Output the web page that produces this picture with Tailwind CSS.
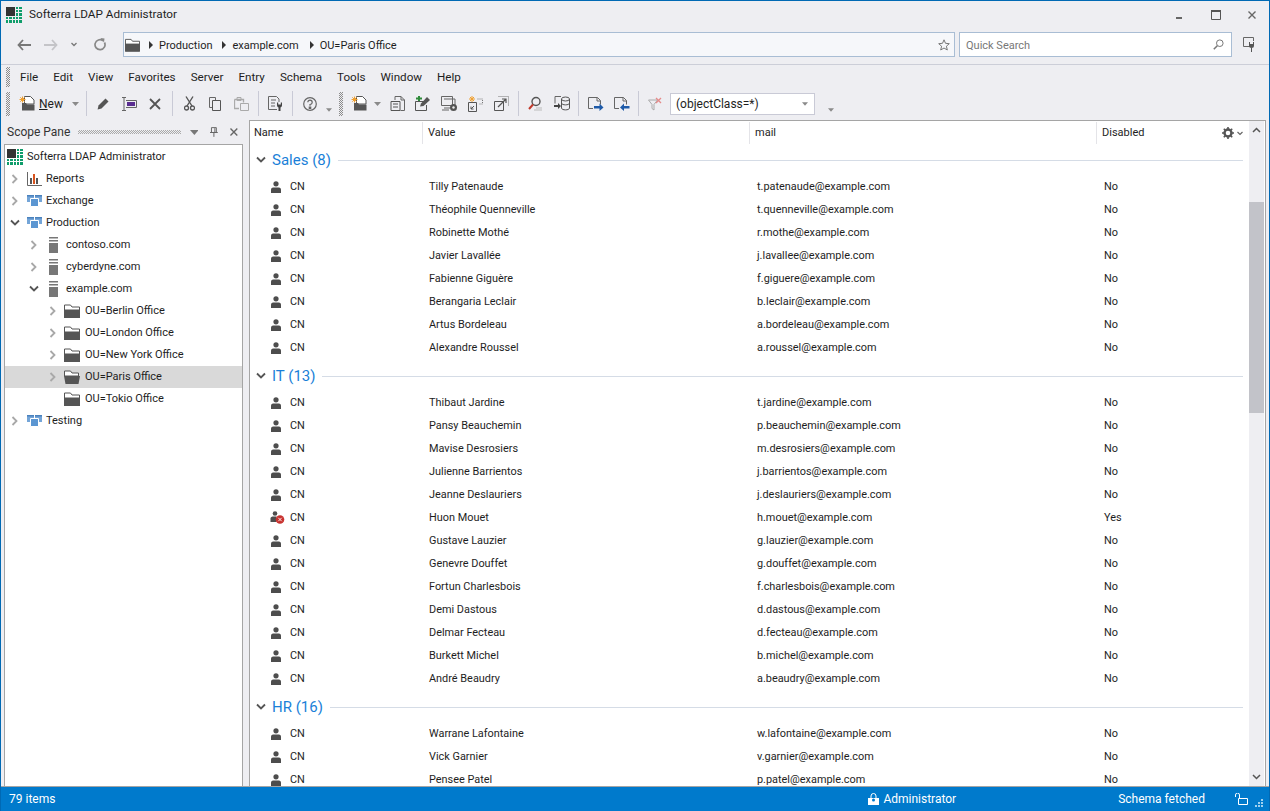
<!DOCTYPE html>
<html>
<head>
<meta charset="UTF-8">
<title>Softerra LDAP Administrator</title>
<script src="https://cdn.jsdelivr.net/npm/@tailwindcss/browser@4"></script>
</head>
<body class="overflow-hidden">
<svg class="hidden" width="0" height="0">
  <defs>
    <symbol id="folder" viewBox="0 0 16 14"><path d="M.5 1h6l1.500 2h7.500v10.500H.5z" fill="#fff" stroke="#555"/><path d="M0 5.500h16V14H0z" fill="#555"/></symbol>
    <symbol id="logo" viewBox="0 0 16 16"><path d="M0 0h9v9H0z" fill="#333"/><path d="M10 0h2v2h-2zM13 0h3v2h-3zM10 3h2v2h-2zM13 3h3v2h-3zM10 6h2v3h-2zM13 6h3v3h-3zM0 10h2v2H0zM3 10h3v2H3zM7 10h2v2H7zM10 10h2v2h-2zM13 10h3v2h-3zM0 13h2v3H0zM3 13h3v3H3zM7 13h2v3H7zM10 13h2v3h-2zM13 13h3v3h-3z" fill="#0f9d6b"/></symbol>
    <symbol id="cluster" viewBox="0 0 15 12"><path d="M0 0h7v7H0zM8 0h7v7H8z" fill="#74a5d8"/><path d="M0 0h7v1.500H0zM8 0h7v1.500H8z" fill="#4a82bd"/><path d="M3.500 3.500h8v8h-8z" fill="#5b96d2" stroke="#fff"/></symbol>
    <symbol id="server" viewBox="0 0 9 16"><path d="M0 0h9v1.500H0zM0 3h9v1.500H0zM0 6h9v10H0z" fill="#777"/></symbol>
    <symbol id="chev-r" viewBox="0 0 8 10"><path d="M1.500 1l4 4-4 4" fill="none" stroke="#a8a8a8" stroke-width="1.800"/></symbol>
    <symbol id="chev-d" viewBox="0 0 10 8"><path d="M1 1.500l4 4 4-4" fill="none" stroke="#555" stroke-width="1.800"/></symbol>
    <symbol id="person" viewBox="0 0 12 12"><circle cx="6" cy="2.800" r="2.600" fill="#4d4d4d"/><path d="M1 12V8.500C1 7 2.500 6.500 4 6.500h4c1.500 0 3 .5 3 2V12z" fill="#4d4d4d"/></symbol>
    <symbol id="tri" viewBox="0 0 7 4"><path d="M0 0h7L3.500 4z" fill="#8a8a8a"/></symbol>
    <symbol id="crumb" viewBox="0 0 4 8"><path d="M0 0l4 4-4 4z" fill="#333"/></symbol>
    <symbol id="newdoc" viewBox="0 0 17 15"><path d="M5.500 .5h6l3.500 3.500v4h-9.500z" fill="#fff" stroke="#555"/><path d="M3 7h4l1 1.500h7.500v6H3z" fill="#555"/><path d="M3.500 .5v6M.5 3.500h6M1.300 1.300l4.400 4.400M5.700 1.300L1.300 5.700" stroke="#f0a030"/></symbol>
  </defs>
</svg>

<div class="w-[1270px] h-[811px] flex flex-col bg-[#eeeef2] border-x border-t border-[#0069b4] text-[12px] text-[#1e1e1e] font-['Roboto','Liberation_Sans',sans-serif]">

  <!-- title bar -->
  <div class="h-[27px] shrink-0 flex items-center pl-[5px]">
    <svg width="16" height="16" class="mr-[7px]"><use href="#logo"/></svg>
    <span class="text-[11.75px]">Softerra LDAP Administrator</span>
    <div class="ml-auto flex items-center">
      <svg width="10" height="10" class="mr-[27px]" viewBox="0 0 10 10"><path d="M2 7h6v2H2z" fill="#666"/></svg>
      <svg width="10" height="10" class="mr-[26px]" viewBox="0 0 10 10"><path d="M.5 .5h9v9h-9z" fill="none" stroke="#555"/><path d="M0 0h10v2H0z" fill="#555"/></svg>
      <svg width="10" height="10" class="mr-[12px]" viewBox="0 0 10 10"><path d="M1.500 1.500l7 7M8.500 1.500l-7 7" stroke="#666" stroke-width="1.400"/></svg>
    </div>
  </div>

  <!-- navigation bar -->
  <div class="h-[37px] shrink-0 flex items-center border-b border-[#ccced8] pb-[3px]">
    <div class="w-[122px] flex items-center shrink-0">
      <svg width="14" height="12" class="ml-[16px]" viewBox="0 0 14 12"><path d="M6 1L1.500 6 6 11M2 6h12" fill="none" stroke="#777" stroke-width="1.800"/></svg>
      <svg width="14" height="12" class="ml-[13px]" viewBox="0 0 14 12"><path d="M8 1l4.500 5L8 11M12 6H0" fill="none" stroke="#c4c4c8" stroke-width="1.800"/></svg>
      <svg width="6" height="5" class="ml-[13px]" viewBox="0 0 6 5"><path d="M.5 1L3 3.500 5.500 1" fill="none" stroke="#777" stroke-width="1.300"/></svg>
      <svg width="12" height="13" class="ml-[17px]" viewBox="0 0 12 13"><path d="M10.500 4.500a5 5 0 1 1-1.500-1.800" fill="none" stroke="#888" stroke-width="1.700"/><path d="M6.500 0l4 .5-.5 4z" fill="#888"/></svg>
    </div>
    <div class="w-[832px] h-[25px] flex items-center border border-[#a9bdd4] bg-[#f6f7fa] pl-[1px] pr-[3px] text-[11px]">
      <svg width="15" height="14"><use href="#folder"/></svg>
      <svg width="4" height="8" class="ml-[9px]"><use href="#crumb"/></svg>
      <span class="ml-[6px] pt-[3px]">Production</span>
      <svg width="4" height="8" class="ml-[10px]"><use href="#crumb"/></svg>
      <span class="ml-[6px] pt-[3px]">example.com</span>
      <svg width="4" height="8" class="ml-[11px]"><use href="#crumb"/></svg>
      <span class="ml-[6px] pt-[3px]">OU=Paris Office</span>
      <svg width="12" height="12" class="ml-auto mr-[1px]" viewBox="0 0 12 12"><path d="M6 .8l1.500 3.500 3.800.4-2.900 2.500.9 3.800L6 9l-3.300 2 .9-3.800L.7 4.700l3.800-.4z" fill="none" stroke="#777"/></svg>
    </div>
    <div class="ml-[4px] w-[273px] h-[25px] flex items-center border border-[#a9bdd4] bg-white pl-[6px] pr-[7px] text-[#777] text-[11px]">
      <span class="pt-[3px]">Quick Search</span>
      <svg width="11" height="11" class="ml-auto" viewBox="0 0 11 11"><circle cx="6.800" cy="4.200" r="3.300" fill="none" stroke="#777"/><path d="M4.300 6.700L.8 10.200" stroke="#777" stroke-width="1.500"/></svg>
    </div>
    <svg width="13" height="15" class="ml-[11px]" viewBox="0 0 13 15"><path d="M7 9.500H.5v-9h10V4" fill="none" stroke="#666"/><path d="M6 5v3.500a2.500 2.500 0 0 0 5 0V5h-1v2H7V5zM8 11h1v4H8z" fill="#555"/></svg>
  </div>

  <!-- menu bar -->
  <div class="h-[24px] shrink-0 flex items-center pl-[5px]">
    <div class="w-[4px] h-[20px] bg-[conic-gradient(#8c8c8c_25%,transparent_0_50%,#8c8c8c_0_75%,transparent_0)] bg-[length:2px_2px] mr-[10px]"></div>
    <div class="flex gap-[15px] text-[11.65px] pt-[1px]">
      <span>File</span><span>Edit</span><span>View</span><span>Favorites</span><span>Server</span><span>Entry</span><span>Schema</span><span>Tools</span><span>Window</span><span>Help</span>
    </div>
  </div>

  <!-- toolbar -->
  <div class="h-[29px] shrink-0 flex items-center pl-[5px]">
    <div class="w-[4px] h-[24px] bg-[conic-gradient(#8c8c8c_25%,transparent_0_50%,#8c8c8c_0_75%,transparent_0)] bg-[length:2px_2px] mr-[9px]"></div>
    <svg width="17" height="15"><use href="#newdoc"/></svg>
    <span class="ml-[3px] w-[33px]"><span class="underline">N</span>ew</span>
    <svg width="7" height="4"><use href="#tri"/></svg>
    <div class="w-px h-[25px] bg-[#c9cad6] ml-[7px]"></div>
    <!-- pencil -->
    <div class="w-[27px] ml-[2px] flex justify-center"><svg width="12" height="12" viewBox="0 0 12 12"><path d="M8.500 .5l3 3-7 7L.6 11.400l.9-3.900z" fill="#555"/></svg></div>
    <!-- rename -->
    <div class="w-[25px] flex justify-center"><svg width="16" height="14" viewBox="0 0 16 14"><path d="M1 .5h4M1 13.500h4M3 .5v13M5 3.500h10.500v7H5" fill="none" stroke="#666"/><path d="M6 5h8v4H6z" fill="#5a2d91"/></svg></div>
    <!-- delete -->
    <div class="w-[27px] flex justify-center"><svg width="12" height="12" viewBox="0 0 12 12"><path d="M1 1l10 10M11 1L1 11" stroke="#555" stroke-width="1.800"/></svg></div>
    <div class="w-px h-[25px] bg-[#c9cad6] ml-[4px]"></div>
    <!-- cut -->
    <div class="w-[32px] flex justify-center"><svg width="11" height="15" viewBox="0 0 11 15"><path d="M2 .5L8 10M9 .5L3 10" stroke="#555" stroke-width="1.400"/><circle cx="2.500" cy="12" r="2" fill="none" stroke="#555" stroke-width="1.300"/><circle cx="8.500" cy="12" r="2" fill="none" stroke="#555" stroke-width="1.300"/></svg></div>
    <!-- copy -->
    <div class="w-[20px] flex justify-center"><svg width="12" height="14" viewBox="0 0 12 14"><path d="M3.500 10.500H.5v-10h6V3" fill="none" stroke="#666"/><path d="M3.500 3.500h8v10h-8z" fill="none" stroke="#555"/></svg></div>
    <!-- paste -->
    <div class="w-[33px] flex justify-center"><svg width="15" height="14" viewBox="0 0 15 14"><path d="M.5 2.500h9v3M5 11.500H.5v-9" fill="none" stroke="#aaa" stroke-width="1.300"/><path d="M3 .5h4v3H3z" fill="none" stroke="#aaa"/><path d="M6.500 6.500h8v7h-8z" fill="none" stroke="#aaa"/></svg></div>
    <div class="w-px h-[25px] bg-[#c9cad6]"></div>
    <!-- schema edit -->
    <div class="w-[33px] flex justify-center"><svg width="16" height="15" viewBox="0 0 16 15"><path d="M9 13.500H.5V.5h8l2.500 2.500v3" fill="none" stroke="#666"/><path d="M3 4h5M3 7h4M3 10h4" stroke="#666"/><path d="M9 6.500v3a2.500 2.500 0 0 0 1.500 2V15h2v-3.500a2.500 2.500 0 0 0 1.500-2v-3h-1.200v2h-2.600v-2z" fill="#444"/></svg></div>
    <div class="w-px h-[25px] bg-[#c9cad6]"></div>
    <!-- help -->
    <div class="w-[33px] flex justify-center"><svg width="14" height="14" viewBox="0 0 14 14"><circle cx="7" cy="7" r="6.300" fill="none" stroke="#666" stroke-width="1.200"/><path d="M4.800 5.300A2.200 2.200 0 1 1 7 7.500v1.300M6.300 10h1.400v1.400H6.300z" fill="none" stroke="#666" stroke-width="1.200"/></svg></div>
    <svg width="6" height="4" class="mt-[12px]"><use href="#tri"/></svg>
    <div class="w-[4px] h-[24px] bg-[conic-gradient(#8c8c8c_25%,transparent_0_50%,#8c8c8c_0_75%,transparent_0)] bg-[length:2px_2px] ml-[7px] mr-[8px]"></div>
    <svg width="17" height="15"><use href="#newdoc"/></svg>
    <svg width="7" height="4" class="ml-[6px]"><use href="#tri"/></svg>
    <!-- attribute icons -->
    <div class="w-[30px] ml-[1px] flex justify-center"><svg width="15" height="15" viewBox="0 0 15 15"><path d="M5 4V.5h6l3.500 3.500v10.500h-4M11 .5V4h3.500" fill="none" stroke="#666"/><path d="M1 5.500h9v9H1z" fill="none" stroke="#555"/><path d="M3 8h5M3 11h5" stroke="#555"/></svg></div>
    <div class="w-[22px] flex justify-center"><svg width="16" height="15" viewBox="0 0 16 15"><path d="M.5 5.500h9M.5 5.500v9h11V9" fill="none" stroke="#555"/><path d="M5 10.500l1-3 6-6.500 3 3-6.500 6z" fill="#555"/><path d="M1 2.500h6M4 0v5" stroke="#2e8b3a" stroke-width="2"/></svg></div>
    <div class="w-[30px] flex justify-center"><svg width="17" height="16" viewBox="0 0 17 16"><path d="M.5.5h11v9H.5zM3 3h11v6" fill="none" stroke="#666"/><path d="M3 12h6M1 14h7" stroke="#666"/><circle cx="12.500" cy="11.500" r="3.500" fill="#555"/><circle cx="12.500" cy="11.500" r="1.200" fill="#eee"/></svg></div>
    <div class="w-[22px] flex justify-center"><svg width="15" height="16" viewBox="0 0 15 16"><path d="M.5 6.500h8v9h-8z" fill="none" stroke="#555"/><path d="M3 13l3-3M3 10.500V13h2.500" fill="none" stroke="#555"/><path d="M9.500 3h5v5h-3" fill="none" stroke="#777" stroke-dasharray="1 1"/><path d="M1 3h6M4 0v6M2 1l4 4M6 1L2 5" stroke="#f0a030"/></svg></div>
    <div class="w-[30px] flex justify-center"><svg width="15" height="15" viewBox="0 0 15 15"><path d="M4.500 .5h10v10" fill="none" stroke="#777" stroke-dasharray="1 1"/><path d="M.5 5.500h9v9h-9z" fill="none" stroke="#555"/><path d="M4 11l8-8M8 3h4v4" fill="none" stroke="#555" stroke-width="1.200"/></svg></div>
    <div class="w-px h-[25px] bg-[#c9cad6] ml-[2px]"></div>
    <!-- search -->
    <div class="w-[33px] flex justify-center"><svg width="16" height="15" viewBox="0 0 16 15"><circle cx="8" cy="5.500" r="4" fill="none" stroke="#555" stroke-width="1.400"/><path d="M5 8.500L1 13" stroke="#c0392b" stroke-width="2"/><path d="M8 12h6M6 14h8" stroke="#bbb"/></svg></div>
    <div class="w-[19px] flex justify-center"><svg width="16" height="15" viewBox="0 0 16 15"><path d="M7 .5H1v7" fill="none" stroke="#666"/><ellipse cx="11.500" cy="3" rx="4" ry="2" fill="none" stroke="#555"/><path d="M7.500 3v9c0 2.500 8 2.500 8 0V3M7.500 7c0 2.500 8 2.500 8 0" fill="none" stroke="#555"/><path d="M0 9h4v-2l3 3-3 3v-2H0z" fill="#444"/></svg></div>
    <div class="w-px h-[25px] bg-[#c9cad6] ml-[7px]"></div>
    <!-- export / import -->
    <div class="w-[33px] flex justify-center"><svg width="16" height="14" viewBox="0 0 16 14"><path d="M5 11.500H.5V.5h9l3 3v4" fill="none" stroke="#666"/><path d="M9 .5V4h3.500" fill="none" stroke="#666"/><path d="M6 9h5.500V6.500l4 4-4 3.500v-2.500H6z" fill="#1e5aa8"/></svg></div>
    <div class="w-[19px] flex justify-center"><svg width="16" height="14" viewBox="0 0 16 14"><path d="M5 11.500H.5V.5h9l3 3v4" fill="none" stroke="#666"/><path d="M9 .5V4h3.500" fill="none" stroke="#666"/><path d="M15.500 9H10V6.500l-4 4 4 3.500v-2.500h5.500z" fill="#1e5aa8"/></svg></div>
    <div class="w-px h-[25px] bg-[#c9cad6] ml-[7px]"></div>
    <!-- filter -->
    <div class="w-[31px] flex justify-center"><svg width="14" height="14" viewBox="0 0 14 14"><path d="M.5 3h9L6 7.500V13L4 11.500v-4z" fill="none" stroke="#aaa"/><path d="M8 1l5 5M13 1L8 6" stroke="#e58a8a" stroke-width="1.300"/></svg></div>
    <div class="w-[145px] h-[22px] flex items-center border border-[#c9cad6] bg-white pl-[5px] pr-[6px]">
      <span>(objectClass=*)</span>
      <svg width="6" height="4" class="ml-auto"><use href="#tri"/></svg>
    </div>
    <svg width="6" height="4" class="ml-[13px] mt-[12px]"><use href="#tri"/></svg>
  </div>

  <!-- panes -->
  <div class="flex-1 flex min-h-0 mt-[2px]">

    <!-- scope pane -->
    <div class="w-[242px] shrink-0 flex flex-col pl-[3px]">
      <div class="h-[24px] shrink-0 flex items-center pl-[3px] pr-[5px]">
        <span class="text-[#333] whitespace-nowrap">Scope Pane</span>
        <div class="ml-[8px] w-[105px] h-[4px] bg-[conic-gradient(#aaa_25%,transparent_0_50%,#aaa_0_75%,transparent_0)] bg-[length:2px_2px]"></div>
        <svg width="9" height="5" class="ml-[9px]" viewBox="0 0 7 4"><path d="M0 0h7L3.500 4z" fill="#777"/></svg>
        <svg width="8" height="10" class="ml-[12px]" viewBox="0 0 8 10"><path d="M1.500 .5h5v5h-5zM0 5.500h8M4 6v4M5 1v4" fill="none" stroke="#666"/></svg>
        <svg width="8" height="8" class="ml-[12px]" viewBox="0 0 8 8"><path d="M.5 .5l7 7M7.500 .5l-7 7" stroke="#666" stroke-width="1.400"/></svg>
      </div>
      <div class="flex-1 bg-white border border-[#a5a5a5] border-b-0 overflow-hidden text-[11px] pt-px">
        <div class="h-[22px] flex items-center pl-[2px]"><svg width="16" height="16" class="mr-[4px]"><use href="#logo"/></svg>Softerra LDAP Administrator</div>
        <div class="h-[22px] flex items-center pl-[6px]"><svg width="8" height="10"><use href="#chev-r"/></svg><svg width="15" height="14" class="ml-[8px]" viewBox="0 0 15 14"><path d="M.5 0v13.500H15" fill="none" stroke="#666"/><path d="M3 6h2v6H3zM9 6h2v6H9z" fill="#555"/><path d="M6 2h2v10H6z" fill="#d9541e"/></svg><span class="ml-[4px]">Reports</span></div>
        <div class="h-[22px] flex items-center pl-[6px]"><svg width="8" height="10"><use href="#chev-r"/></svg><svg width="15" height="12" class="ml-[8px]"><use href="#cluster"/></svg><span class="ml-[4px]">Exchange</span></div>
        <div class="h-[22px] flex items-center pl-[5px]"><svg width="10" height="8"><use href="#chev-d"/></svg><svg width="15" height="12" class="ml-[7px]"><use href="#cluster"/></svg><span class="ml-[4px]">Production</span></div>
        <div class="h-[22px] flex items-center pl-[25px]"><svg width="8" height="10"><use href="#chev-r"/></svg><svg width="9" height="16" class="ml-[11px]"><use href="#server"/></svg><span class="ml-[8px]">contoso.com</span></div>
        <div class="h-[22px] flex items-center pl-[25px]"><svg width="8" height="10"><use href="#chev-r"/></svg><svg width="9" height="16" class="ml-[11px]"><use href="#server"/></svg><span class="ml-[8px]">cyberdyne.com</span></div>
        <div class="h-[22px] flex items-center pl-[24px]"><svg width="10" height="8"><use href="#chev-d"/></svg><svg width="9" height="16" class="ml-[10px]"><use href="#server"/></svg><span class="ml-[8px]">example.com</span></div>
        <div class="h-[22px] flex items-center pl-[44px]"><svg width="8" height="10"><use href="#chev-r"/></svg><svg width="16" height="14" class="ml-[7px]"><use href="#folder"/></svg><span class="ml-[5px]">OU=Berlin Office</span></div>
        <div class="h-[22px] flex items-center pl-[44px]"><svg width="8" height="10"><use href="#chev-r"/></svg><svg width="16" height="14" class="ml-[7px]"><use href="#folder"/></svg><span class="ml-[5px]">OU=London Office</span></div>
        <div class="h-[22px] flex items-center pl-[44px]"><svg width="8" height="10"><use href="#chev-r"/></svg><svg width="16" height="14" class="ml-[7px]"><use href="#folder"/></svg><span class="ml-[5px]">OU=New York Office</span></div>
        <div class="h-[22px] flex items-center pl-[44px] bg-[#d9d9d9]"><svg width="8" height="10"><use href="#chev-r"/></svg><svg width="16" height="14" class="ml-[7px]" viewBox="0 0 16 14"><path d="M.5 1h6l1.500 2h6.500v3H.5z" fill="#fff" stroke="#555"/><path d="M0 6h16l-1.500 8H1.500z" fill="#555"/></svg><span class="ml-[5px]">OU=Paris Office</span></div>
        <div class="h-[22px] flex items-center pl-[59px]"><svg width="16" height="14"><use href="#folder"/></svg><span class="ml-[5px]">OU=Tokio Office</span></div>
        <div class="h-[22px] flex items-center pl-[6px]"><svg width="8" height="10"><use href="#chev-r"/></svg><svg width="15" height="12" class="ml-[8px]"><use href="#cluster"/></svg><span class="ml-[4px]">Testing</span></div>
      </div>
    </div>

    <!-- results -->
    <div class="ml-[6px] w-[1017px] shrink-0 flex bg-white border-l border-r border-t border-[#a5a5a5] min-h-0 text-[11px]">
      <div class="flex-1 min-w-0 flex flex-col overflow-hidden">
        <div class="h-[24px] shrink-0 flex items-center relative">
          <div class="w-[173px] h-[22px] shrink-0 flex items-center pl-[4px] border-r border-[#e4e4e8]">Name</div>
          <div class="w-[327px] h-[22px] shrink-0 flex items-center pl-[5px] border-r border-[#e4e4e8]">Value</div>
          <div class="w-[347px] h-[22px] shrink-0 flex items-center pl-[5px] border-r border-[#e4e4e8]">mail</div>
          <div class="flex-1 flex items-center pl-[5px]">
            <span>Disabled</span>
            <svg width="12" height="12" class="ml-auto" viewBox="0 0 12 12"><circle cx="6" cy="6" r="3.500" fill="none" stroke="#555" stroke-width="2.400"/><path d="M6 0v12M0 6h12M1.800 1.800l8.400 8.400M10.200 1.800l-8.400 8.400" stroke="#555" stroke-width="1.600" stroke-dasharray="2 8"/></svg>
            <svg width="6" height="5" class="ml-[3px] mr-[6px]" viewBox="0 0 6 5"><path d="M.5 1L3 3.500 5.500 1" fill="none" stroke="#666" stroke-width="1.200"/></svg>
          </div>
        </div>
        <div id="list" class="flex-1 min-h-0 overflow-hidden pt-[4px]"></div>
      </div>
      <!-- scrollbar -->
      <div class="w-[15px] shrink-0 flex flex-col bg-[#eeeef2] mr-px">
        <div class="h-[18px] flex items-center justify-center"><svg width="9" height="6" viewBox="0 0 9 6"><path d="M1 5l3.500-3.500L8 5" fill="none" stroke="#555" stroke-width="1.500"/></svg></div>
        <div class="h-[211px] bg-[#c2c3c9] mt-[63px]"></div>
        <div class="mt-auto h-[18px] flex items-center justify-center"><svg width="9" height="6" viewBox="0 0 9 6"><path d="M1 1l3.500 3.500L8 1" fill="none" stroke="#555" stroke-width="1.500"/></svg></div>
      </div>
    </div>
    <div class="w-[3px] shrink-0"></div>
  </div>

  <!-- status bar -->
  <div class="h-[25px] shrink-0 flex items-center bg-[#007acc] text-white border-t border-[#a5a5a5]">
    <span class="ml-[8px]">79 items</span>
    <svg width="11" height="12" class="ml-[813px]" viewBox="0 0 11 12"><path d="M3 5V3a2.500 2.500 0 0 1 5 0v2" fill="none" stroke="#fff"/><path d="M0 5h11v7H0z" fill="#fff"/><circle cx="5.500" cy="7" r="1.500" fill="#007acc"/></svg>
    <span class="ml-[4px]">Administrator</span>
    <span class="ml-[162px]">Schema fetched</span>
    <svg width="13" height="12" class="ml-[30px]" viewBox="0 0 13 12"><path d="M.5 4V2a2 2 0 0 1 4 0v3" fill="none" stroke="#fff"/><path d="M3.500 5.500h9v6h-9z" fill="none" stroke="#fff"/></svg>
    <svg width="8" height="8" class="ml-[7px] mt-[8px]" viewBox="0 0 8 8"><path d="M6 0h2v2H6zM3 3h2v2H3zM6 3h2v2H6zM0 6h2v2H0zM3 6h2v2H3zM6 6h2v2H6z" fill="#9fd0ef"/></svg>
  </div>
</div>

<script>
  var groups = [
    ["Sales (8)", "mt-0", [
      ["Tilly Patenaude","t.patenaude"],["Théophile Quenneville","t.quenneville"],["Robinette Mothé","r.mothe"],["Javier Lavallée","j.lavallee"],
      ["Fabienne Giguère","f.giguere"],["Berangaria Leclair","b.leclair"],["Artus Bordeleau","a.bordeleau"],["Alexandre Roussel","a.roussel"]]],
    ["IT (13)", "mt-[6px]", [
      ["Thibaut Jardine","t.jardine"],["Pansy Beauchemin","p.beauchemin"],["Mavise Desrosiers","m.desrosiers"],["Julienne Barrientos","j.barrientos"],
      ["Jeanne Deslauriers","j.deslauriers"],["Huon Mouet","h.mouet","Yes"],["Gustave Lauzier","g.lauzier"],["Genevre Douffet","g.douffet"],
      ["Fortun Charlesbois","f.charlesbois"],["Demi Dastous","d.dastous"],["Delmar Fecteau","d.fecteau"],["Burkett Michel","b.michel"],["André Beaudry","a.beaudry"]]],
    ["HR (16)", "mt-[6px]", [
      ["Warrane Lafontaine","w.lafontaine"],["Vick Garnier","v.garnier"],["Pensee Patel","p.patel"]]]
  ]

  var person = '<svg width="12" height="12"><use href="#person"/></svg>'
  var disabledPerson = '<svg width="15" height="13" viewBox="0 0 15 13"><circle cx="5" cy="2.500" r="2.300" fill="#4d4d4d"/><path d="M.5 11V7.500c0-1.500 1.500-2 3-2h3v5.500z" fill="#4d4d4d"/><circle cx="10" cy="8.500" r="4.300" fill="#c8322f"/><path d="M8.300 6.800l3.400 3.400M11.700 6.800l-3.400 3.400" stroke="#fff" stroke-width=".9"/></svg>'

  var html = ""
  for (var i = 0; i < groups.length; i++) {
    html += '<div class="h-[22px] flex items-center ' + groups[i][1] + ' mb-[4px]">'
      + '<svg width="10" height="8" class="ml-[6px]"><use href="#chev-d"/></svg>'
      + '<span class="ml-[6px] text-[15px] text-[#1a7fd8]">' + groups[i][0] + '</span>'
      + '<div class="ml-[7px] mr-[6px] flex-1 h-px bg-[#d5dce6]"></div></div>'
    var rows = groups[i][2]
    for (var j = 0; j < rows.length; j++) {
      var off = rows[j][2] == "Yes"
      html += '<div class="h-[23px] flex items-center text-[10.9px]">'
        + '<div class="w-[40px] shrink-0 flex items-center pl-[20px]">' + (off ? disabledPerson : person) + '</div>'
        + '<div class="w-[139px] shrink-0 pt-[2px]">CN</div>'
        + '<div class="w-[328px] shrink-0 pt-[2px]">' + rows[j][0] + '</div>'
        + '<div class="w-[347px] shrink-0 pt-[2px]">' + rows[j][1] + '@example.com</div>'
        + '<div class="pt-[2px]">' + (off ? "Yes" : "No") + '</div></div>'
    }
  }
  document.getElementById("list").innerHTML = html
</script>
</body>
</html>
